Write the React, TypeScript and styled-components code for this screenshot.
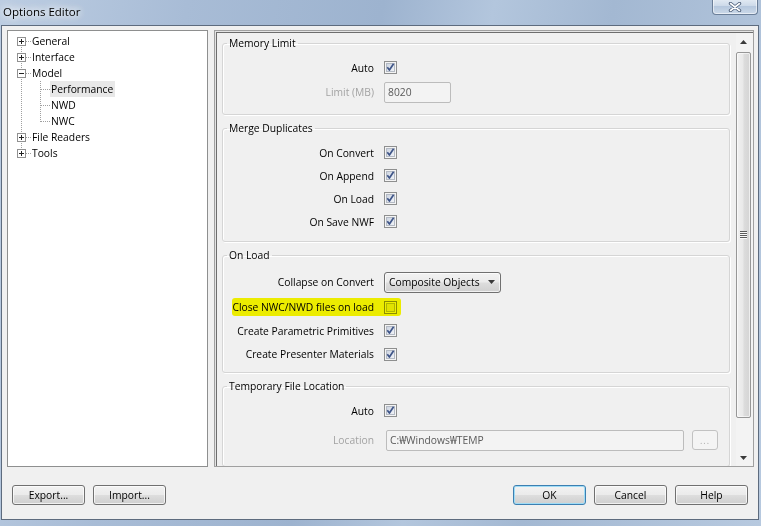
import React from 'react';
import styled, { createGlobalStyle, css } from 'styled-components';

const Global = createGlobalStyle`
  html, body { margin: 0; padding: 0; }
  body {
    width: 761px; height: 526px; overflow: hidden;
    font-family: "Open Sans", "Noto Sans", "Noto Sans CJK KR", sans-serif;
    font-size: 10.3px; color: #000;
  }
`;

const Window = styled.div`
  width: 761px; height: 526px; display: flex; flex-direction: column; overflow: hidden;
  background: linear-gradient(100deg, #bccde2 0%, #a8bcd6 22%, #9db3cf 45%, #b3c6dd 58%, #a3b8d2 72%, #b7c9df 100%);
`;

const TitleBar = styled.div`
  height: 25px; flex: none; display: flex; justify-content: space-between; align-items: flex-start;
`;

const Title = styled.span`
  font-size: 11.5px; line-height: 23px; padding-left: 3px;
  text-shadow: 0 0 6px #fff, 0 0 10px #fff, 0 0 14px #fff;
`;

const CloseButton = styled.div`
  width: 46px; height: 16px; margin: -1px 3px 0 0; box-sizing: border-box;
  border: 1px solid #6b7f99; border-top: none; border-radius: 0 0 4px 4px;
  background: linear-gradient(#e3ebf4, #cbd8e8 50%, #b6c8de 50%, #cbd9e9);
  box-shadow: inset 0 0 0 1px rgba(255,255,255,0.55);
  display: flex; align-items: center; justify-content: center;
`;

const Body = styled.div`
  flex: none; height: 495px; box-sizing: border-box; margin: 0 2px 0 1px;
  border: 1px solid #5d6b7e; background: #f0f0f0;
  display: flex; flex-direction: column; padding: 4px 4px 0 5px;
`;

const Main = styled.div`
  display: flex; gap: 6px; height: 437px; flex: none;
`;

const Tree = styled.div`
  width: 201px; flex: none; box-sizing: border-box; background: #fff;
  border: 1px solid #8e8f8f; padding: 2px 0 0 4px;
`;

const TreeRow = styled.div`
  display: flex; height: 16px; align-items: center;
`;

const TreeLabel = styled.span<{ $selected?: boolean }>`
  line-height: 16px; padding: 0 2px 0 1px; white-space: nowrap;
  background: ${p => (p.$selected ? '#e8e8e8' : 'transparent')};
`;

const Panel = styled.div`
  flex: 1; display: flex; box-sizing: border-box; border: 1px solid #a0a0a0;
  padding: 2px 0 0 2px;
  box-shadow: inset 1px 1px 0 #e3e3e3, inset 2px 2px 0 #6d6d6d;
`;

const Content = styled.div`
  flex: 1; overflow: hidden; padding: 2px 6px 0 5px;
`;

const Group = styled.fieldset<{ $pt?: number; $pb?: number }>`
  margin: 0 0 5px; padding: ${p => p.$pt ?? 5}px 0 ${p => p.$pb ?? 7}px; min-width: 0;
  border: 1px solid #d5d5d5; border-radius: 3px;
  box-shadow: inset 1px 1px 0 #fff, 1px 1px 0 #fff;
`;

const Legend = styled.legend`
  margin-left: 4px; padding: 0 2px; line-height: 16px;
`;

const Row = styled.div<{ $h: number; $mark?: boolean }>`
  display: grid; grid-template-columns: 161px 1fr; align-items: center;
  height: ${p => p.$h}px; position: relative;
  ${p => p.$mark && css`
    &::after {
      content: ''; position: absolute; left: 9px; width: 169px; top: 50%;
      height: 18px; margin-top: -9px; background: #fbfb00; border-radius: 3px;
      mix-blend-mode: multiply; pointer-events: none;
    }
  `}
`;

const Label = styled.span<{ $disabled?: boolean }>`
  text-align: right; padding-right: 10px; white-space: nowrap;
  color: ${p => (p.$disabled ? '#a3a3a3' : '#000')};
`;

const Control = styled.div`
  display: flex; align-items: center;
`;

const TextBox = styled.div<{ $w: number; $ml?: number }>`
  width: ${p => p.$w}px; height: 21px; box-sizing: border-box; margin-left: ${p => p.$ml ?? 0}px;
  border: 1px solid #bcbcbc; border-radius: 2px; background: #f3f3f3;
  color: #5a5a5a; padding-left: 3px; display: flex; align-items: center; white-space: nowrap;
`;

const SmallButton = styled.div`
  width: 26px; height: 20px; box-sizing: border-box; margin-left: 8px;
  border: 1px solid #c2c2c2; border-radius: 3px; background: #f4f4f4;
  color: #a8a8a8; display: flex; align-items: center; justify-content: center;
  font-size: 9px; letter-spacing: 1px;
`;

const Combo = styled.div`
  width: 117px; height: 21px; box-sizing: border-box;
  border: 1px solid #707070; border-radius: 3px;
  background: linear-gradient(#f2f2f2, #ebebeb 48%, #dddddd 52%, #cfcfcf);
  box-shadow: inset 0 0 0 1px rgba(255,255,255,0.7);
  display: flex; align-items: center; justify-content: space-between; padding: 0 5px 0 4px;
`;

const ScrollTrack = styled.div`
  width: 17px; flex: none; display: flex; flex-direction: column; align-items: flex-start;
  background: #f3f3f3;
`;

const ArrowBtn = styled.div`
  width: 15px; height: 17px; flex: none; display: flex; align-items: center; justify-content: center;
`;

const Thumb = styled.div`
  width: 15px; height: 366px; margin-top: 2px; box-sizing: border-box; flex: none;
  border: 1px solid #979797; border-radius: 2px;
  background: linear-gradient(to right, #f1f1f1, #e9e9e9 45%, #dcdcdc 55%, #d4d4d4);
  box-shadow: inset 0 0 0 1px rgba(255,255,255,0.6);
  display: flex; align-items: center; justify-content: center;
`;

const Spacer = styled.div`flex: 1;`;

const Footer = styled.div`
  flex: 1; display: flex; justify-content: space-between; align-items: flex-start;
  padding: 18px 6px 0 5px;
`;

const ButtonGroup = styled.div`
  display: flex; gap: 8px;
`;

const Button = styled.button<{ $default?: boolean }>`
  width: 73px; height: 20px; box-sizing: border-box; padding: 0; margin: 0;
  font: inherit; color: #000; cursor: default;
  border: 1px solid #707070; border-radius: 3px;
  background: linear-gradient(#f2f2f2, #ebebeb 48%, #dddddd 52%, #cfcfcf);
  box-shadow: inset 0 0 0 1px rgba(255,255,255,0.7);
  ${p => p.$default && css`
    border-color: #3c7fb1;
    box-shadow: inset 0 0 0 1px #9fdcf6;
  `}
`;

const Check: React.FC<{ checked?: boolean }> = ({ checked }) => (
  <svg width="13" height="13" viewBox="0 0 13 13">
    <defs>
      <linearGradient id="cbg" x1="0" y1="0" x2="1" y2="1">
        <stop offset="0" stopColor="#cbd3e0" />
        <stop offset="1" stopColor="#f3f5f8" />
      </linearGradient>
    </defs>
    <rect x="0.5" y="0.5" width="12" height="12" fill="#f4f4f4" stroke="#8e8f8f" />
    <rect x="2.5" y="2.5" width="8" height="8" fill={checked ? 'url(#cbg)' : '#e6e6e6'} stroke="#b4bac4" />
    {checked && (
      <path d="M3.3 6.3 L5.4 9 L9.6 2.8" fill="none" stroke="#3f5588" strokeWidth="1.7" strokeLinejoin="round" />
    )}
  </svg>
);

type Kind = 'first' | 'mid' | 'last' | 'pass';

const Connector: React.FC<{ kind: Kind; expander?: 'plus' | 'minus' }> = ({ kind, expander }) => {
  const dot = { stroke: '#a0a0a0', strokeDasharray: '1 1', shapeRendering: 'crispEdges' as const };
  const y1 = kind === 'first' ? 8 : 0;
  const y2 = kind === 'last' ? 9 : 16;
  return (
    <svg width="19" height="16" viewBox="0 0 19 16" style={{ flex: 'none' }}>
      <line x1="9.5" y1={y1} x2="9.5" y2={y2} {...dot} />
      {kind !== 'pass' && <line x1="10" y1="8.5" x2="19" y2="8.5" {...dot} />}
      {expander && (
        <g shapeRendering="crispEdges">
          <rect x="5.5" y="4.5" width="8" height="8" fill="#fff" stroke="#919191" />
          <line x1="7" y1="8.5" x2="12" y2="8.5" stroke="#222" />
          {expander === 'plus' && <line x1="9.5" y1="6" x2="9.5" y2="11" stroke="#222" />}
        </g>
      )}
    </svg>
  );
};

const Arrow: React.FC<{ down?: boolean }> = ({ down }) => (
  <svg width="7" height="4" viewBox="0 0 7 4">
    <path d={down ? 'M0 0 H7 L3.5 4 Z' : 'M0 4 H7 L3.5 0 Z'} fill="#3a3a3a" />
  </svg>
);

export default function App() {
  return (
    <>
      <Global />
      <Window>
        <TitleBar>
          <Title>Options Editor</Title>
          <CloseButton>
            <svg width="14" height="10" viewBox="0 0 14 10">
              <path d="M2.5 1.5 L11.5 8.5 M11.5 1.5 L2.5 8.5" stroke="#4b5d78" strokeWidth="3.4" strokeLinecap="round" />
              <path d="M2.5 1.5 L11.5 8.5 M11.5 1.5 L2.5 8.5" stroke="#fff" strokeWidth="1.6" strokeLinecap="round" />
            </svg>
          </CloseButton>
        </TitleBar>
        <Body>
          <Main>
            <Tree>
              <TreeRow><Connector kind="first" expander="plus" /><TreeLabel>General</TreeLabel></TreeRow>
              <TreeRow><Connector kind="mid" expander="plus" /><TreeLabel>Interface</TreeLabel></TreeRow>
              <TreeRow><Connector kind="mid" expander="minus" /><TreeLabel>Model</TreeLabel></TreeRow>
              <TreeRow><Connector kind="pass" /><Connector kind="mid" /><TreeLabel $selected>Performance</TreeLabel></TreeRow>
              <TreeRow><Connector kind="pass" /><Connector kind="mid" /><TreeLabel>NWD</TreeLabel></TreeRow>
              <TreeRow><Connector kind="pass" /><Connector kind="last" /><TreeLabel>NWC</TreeLabel></TreeRow>
              <TreeRow><Connector kind="mid" expander="plus" /><TreeLabel>File Readers</TreeLabel></TreeRow>
              <TreeRow><Connector kind="last" expander="plus" /><TreeLabel>Tools</TreeLabel></TreeRow>
            </Tree>
            <Panel>
              <Content>
                <Group $pb={9}>
                  <Legend>Memory Limit</Legend>
                  <Row $h={23}><Label>Auto</Label><Control><Check checked /></Control></Row>
                  <Row $h={26}><Label $disabled>Limit (MB)</Label><Control><TextBox $w={67}>8020</TextBox></Control></Row>
                </Group>
                <Group $pb={8}>
                  <Legend>Merge Duplicates</Legend>
                  <Row $h={23}><Label>On Convert</Label><Control><Check checked /></Control></Row>
                  <Row $h={23}><Label>On Append</Label><Control><Check checked /></Control></Row>
                  <Row $h={23}><Label>On Load</Label><Control><Check checked /></Control></Row>
                  <Row $h={23}><Label>On Save NWF</Label><Control><Check checked /></Control></Row>
                </Group>
                <Group $pt={6} $pb={6}>
                  <Legend>On Load</Legend>
                  <Row $h={26}>
                    <Label>Collapse on Convert</Label>
                    <Control><Combo><span>Composite Objects</span><Arrow down /></Combo></Control>
                  </Row>
                  <Row $h={24} $mark><Label>Close NWC/NWD files on load</Label><Control><Check /></Control></Row>
                  <Row $h={23}><Label>Create Parametric Primitives</Label><Control><Check checked /></Control></Row>
                  <Row $h={24}><Label>Create Presenter Materials</Label><Control><Check checked /></Control></Row>
                </Group>
                <Group $pb={8}>
                  <Legend>Temporary File Location</Legend>
                  <Row $h={23}><Label>Auto</Label><Control><Check checked /></Control></Row>
                  <Row $h={36}>
                    <Label $disabled>Location</Label>
                    <Control>
                      <TextBox $w={298} $ml={2}>C:₩Windows₩TEMP</TextBox>
                      <SmallButton>...</SmallButton>
                    </Control>
                  </Row>
                </Group>
              </Content>
              <ScrollTrack>
                <ArrowBtn><Arrow /></ArrowBtn>
                <Thumb>
                  <svg width="7" height="8" viewBox="0 0 7 8">
                    {[0, 2, 4, 6].map(y => (
                      <g key={y} shapeRendering="crispEdges">
                        <line x1="0" y1={y + 0.5} x2="7" y2={y + 0.5} stroke="#5c5c5c" />
                        <line x1="0" y1={y + 1.5} x2="7" y2={y + 1.5} stroke="#fafafa" />
                      </g>
                    ))}
                  </svg>
                </Thumb>
                <Spacer />
                <ArrowBtn><Arrow down /></ArrowBtn>
              </ScrollTrack>
            </Panel>
          </Main>
          <Footer>
            <ButtonGroup>
              <Button>Export...</Button>
              <Button>Import...</Button>
            </ButtonGroup>
            <ButtonGroup>
              <Button $default>OK</Button>
              <Button>Cancel</Button>
              <Button>Help</Button>
            </ButtonGroup>
          </Footer>
        </Body>
      </Window>
    </>
  );
}
